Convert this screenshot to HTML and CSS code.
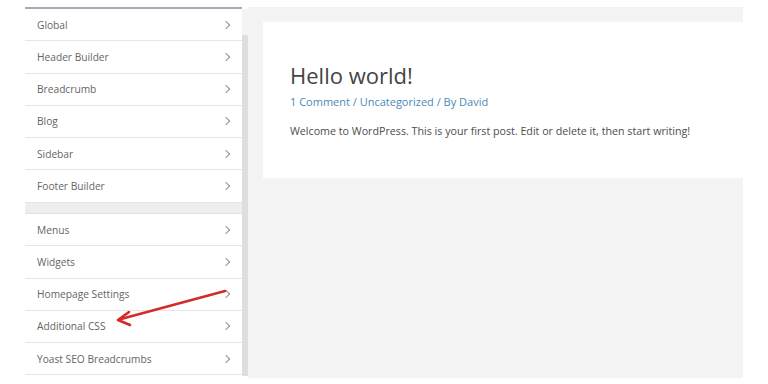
FILE: index.html
```html
<!DOCTYPE html>
<html>
<head>
<meta charset="utf-8">
<link rel="stylesheet" href="styles.css">
</head>
<body>
<div class="page">
  <aside class="sidebar">
    <div class="panel">
      <ul class="menu">
        <li class="item">Global<span class="chev"></span></li>
        <li class="item">Header Builder<span class="chev"></span></li>
        <li class="item">Breadcrumb<span class="chev"></span></li>
        <li class="item">Blog<span class="chev"></span></li>
        <li class="item">Sidebar<span class="chev"></span></li>
        <li class="item">Footer Builder<span class="chev"></span></li>
      </ul>
      <div class="sep"></div>
      <ul class="menu">
        <li class="item">Menus<span class="chev"></span></li>
        <li class="item">Widgets<span class="chev"></span></li>
        <li class="item">Homepage Settings<span class="chev"></span></li>
        <li class="item">Additional CSS<span class="chev"></span></li>
        <li class="item">Yoast SEO Breadcrumbs<span class="chev"></span></li>
      </ul>
    </div>
    <div class="scroll"><div class="thumb"></div></div>
  </aside>
  <main class="preview">
    <article class="card">
      <h1 class="title">Hello world!</h1>
      <p class="meta"><a>1 Comment</a> / <a>Uncategorized</a> / By <a>David</a></p>
      <p class="body">Welcome to WordPress. This is your first post. Edit or delete it, then start writing!</p>
    </article>
  </main>
</div>
<svg class="arrow" width="768" height="384" viewBox="0 0 768 384">
  <path d="M225 291 L121 319" stroke="#d42a2a" stroke-width="2.6" fill="none" stroke-linecap="round"/>
  <path d="M129 312 L118 320 L130 325" stroke="#d42a2a" stroke-width="2.6" fill="none" stroke-linecap="round" stroke-linejoin="round"/>
</svg>
</body>
</html>
```
FILE: styles.css
```css
html, body { margin: 0; padding: 0; background: #fff; }
body { font-family: "Open Sans", "Noto Sans", sans-serif; width: 768px; height: 384px; overflow: hidden; position: relative; }
.page { display: flex; align-items: flex-start; }
.sidebar { display: flex; padding-left: 25px; padding-top: 7px; }
.panel { width: 217px; border-top: 2px solid #a4adb5; }
.menu { list-style: none; margin: 0; padding: 0; }
.item {
  display: flex; align-items: center; justify-content: space-between;
  height: 31.25px; border-bottom: 1px solid #e6e6e6; background: #fff;
  padding: 0 11px 0 12px; font-size: 10.2px; color: #656565;
}
.chev { width: 5px; height: 5px; border-top: 1.3px solid #909090; border-right: 1.3px solid #909090; transform: rotate(45deg); margin-right: 2px; }
.sep { height: 10.5px; background: #eeeeee; border-bottom: 1px solid #e2e2e2; }
.scroll { width: 6px; height: 367px; background: #f3f3f3; margin-top: 2px; display: flex; flex-direction: column; }
.thumb { margin-top: 26px; flex: 1; background: #dedede; }
.preview { width: 495px; height: 371px; margin-top: 7px; background: #f3f3f3; padding: 15px 0 0 15px; box-sizing: border-box; }
.card { background: #fff; height: 156px; padding: 40px 0 0 27px; box-sizing: border-box; }
.title { margin: 0; font-weight: 400; font-size: 22px; line-height: 26px; color: #444; }
.meta { margin: 6px 0 0; font-size: 11px; line-height: 16px; color: #4b89b7; }
.meta a { color: #4b89b7; }
.body { margin: 13px 0 0; font-size: 10.7px; line-height: 16px; color: #4d4d4d; }
.arrow { position: absolute; left: 0; top: 0; pointer-events: none; }
```
